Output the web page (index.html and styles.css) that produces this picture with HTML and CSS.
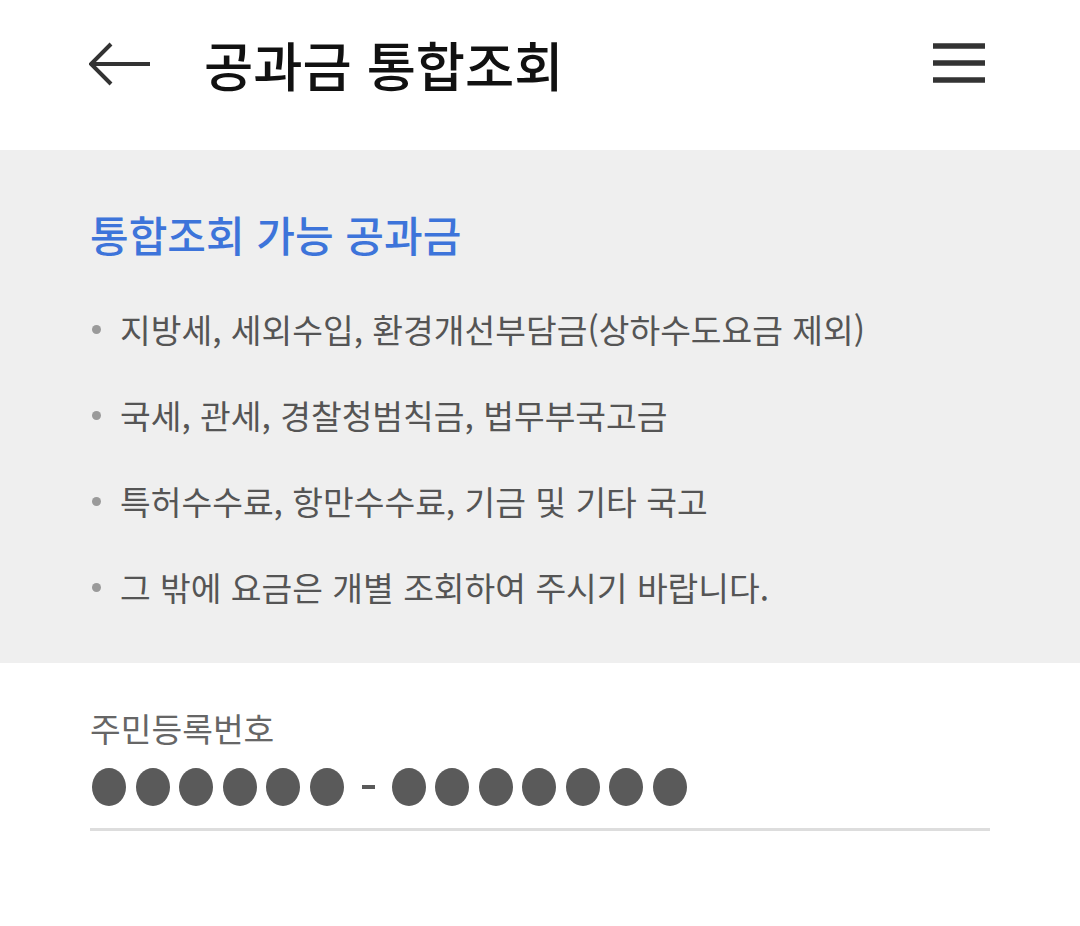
FILE: index.html
```html
<!DOCTYPE html>
<html lang="ko">
<head>
<meta charset="utf-8">
<title>공과금 통합조회</title>
<link rel="stylesheet" href="styles.css">
</head>
<body>
<header class="topbar">
  <button class="icon-btn back" aria-label="뒤로">
    <svg width="62" height="44" viewBox="0 0 62 44"><path d="M22 2 L2 22 L22 42 M2 22 H61" fill="none" stroke="#333" stroke-width="4"/></svg>
  </button>
  <h1 class="title">공과금 통합조회</h1>
  <button class="icon-btn menu" aria-label="메뉴">
    <svg width="54" height="42" viewBox="0 0 54 42"><path d="M1 4 H53 M1 21 H53 M1 38 H53" fill="none" stroke="#333" stroke-width="5.5"/></svg>
  </button>
</header>
<section class="info">
  <h2 class="info-title">통합조회 가능 공과금</h2>
  <ul class="info-list">
    <li>지방세, 세외수입, 환경개선부담금(상하수도요금 제외)</li>
    <li>국세, 관세, 경찰청범칙금, 법무부국고금</li>
    <li>특허수수료, 항만수수료, 기금 및 기타 국고</li>
    <li>그 밖에 요금은 개별 조회하여 주시기 바랍니다.</li>
  </ul>
</section>
<section class="form">
  <div class="label">주민등록번호</div>
  <div class="masked">
    <div class="dots"><span></span><span></span><span></span><span></span><span></span><span></span></div>
    <span class="dash"></span>
    <div class="dots"><span></span><span></span><span></span><span></span><span></span><span></span><span></span></div>
  </div>
</section>
</body>
</html>
```
FILE: styles.css
```css
* { box-sizing: border-box; }
html, body { margin: 0; padding: 0; background: #fff; }
body {
  font-family: "Noto Sans CJK KR", "Noto Sans", sans-serif;
  width: 1080px;
}
.topbar {
  height: 150px;
  display: flex;
  align-items: center;
  padding: 0 94px 22px 89px;
}
.icon-btn {
  border: 0;
  background: none;
  padding: 0;
  display: flex;
  cursor: pointer;
}
.back { margin-right: 53px; }
.title {
  margin: 0;
  font-size: 53.5px;
  font-weight: 500;
  color: #111;
  line-height: 60px;
  flex: 1;
}
.menu { margin-top: -2px; }
.info {
  background: #efefef;
  height: 513px;
  padding: 58px 90px 0;
}
.info-title {
  margin: 0 0 26px;
  font-size: 42px;
  line-height: 52px;
  font-weight: 500;
  color: #3d74da;
}
.info-list {
  list-style: none;
  margin: 0;
  padding: 0;
}
.info-list li {
  position: relative;
  padding-left: 30px;
  font-size: 33.4px;
  line-height: 86px;
  color: #555;
}
.info-list li::before {
  content: "";
  position: absolute;
  left: 2px;
  top: 39px;
  width: 9px;
  height: 9px;
  border-radius: 50%;
  background: #9a9a9a;
}
.form {
  padding: 45px 90px 0;
}
.label {
  font-size: 33.4px;
  line-height: 40px;
  color: #666;
}
.masked {
  margin-top: 20px;
  display: flex;
  align-items: center;
  padding: 0 0 22px 2px;
  border-bottom: 3px solid #dddddd;
}
.dots { display: flex; gap: 9.5px; }
.dots span {
  width: 34px;
  height: 38px;
  border-radius: 50%;
  background: #5a5a5a;
}
.dash {
  width: 13px;
  height: 4px;
  background: #5a5a5a;
  margin: 0 17px 0 18px;
}
```
